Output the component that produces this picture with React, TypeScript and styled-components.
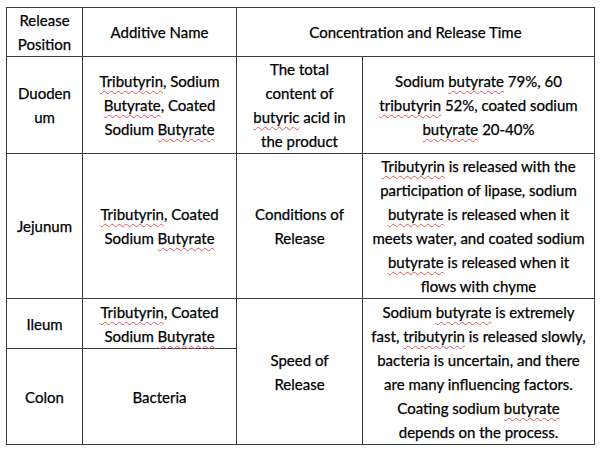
import styled, { createGlobalStyle } from "styled-components";

const GlobalStyle = createGlobalStyle`
  html, body {
    margin: 0;
    padding: 0;
    background: #ffffff;
  }
  body {
    font-family: Lato, "Liberation Sans", sans-serif;
    color: #000;
  }
`;

const Page = styled.div`
  width: 600px;
  height: 453px;
  padding: 7px 0 0 6px;
  box-sizing: border-box;
`;

const Table = styled.table`
  border-collapse: collapse;
  table-layout: fixed;
  width: 588px;
  border: 1.5px solid #666;
`;

const Cell = styled.td<{ $h?: number }>`
  border: 1px solid #3a3a3a;
  height: ${(p) => (p.$h ? `${p.$h}px` : "auto")};
  padding: 0;
  text-align: center;
  vertical-align: middle;
  font-size: 15px;
  line-height: 24px;
  white-space: nowrap;
  -webkit-text-stroke: 0.25px #000;
`;

const Typo = styled.span`
  text-decoration: underline wavy #e05858;
  text-decoration-thickness: 1px;
  text-underline-offset: 3px;
  text-decoration-skip-ink: none;
`;

export default function App() {
  return (
    <>
      <GlobalStyle />
      <Page>
        <Table>
          <colgroup>
            <col style={{ width: 76 }} />
            <col style={{ width: 154 }} />
            <col style={{ width: 126 }} />
            <col style={{ width: 232 }} />
          </colgroup>
          <tbody>
            <tr>
              <Cell $h={48}>
                Release
                <br />
                Position
              </Cell>
              <Cell>Additive Name</Cell>
              <Cell colSpan={2}>Concentration and Release Time</Cell>
            </tr>
            <tr>
              <Cell $h={96}>
                Duoden
                <br />
                um
              </Cell>
              <Cell>
                <Typo>Tributyrin</Typo>, Sodium
                <br />
                <Typo>Butyrate</Typo>, Coated
                <br />
                Sodium <Typo>Butyrate</Typo>
              </Cell>
              <Cell>
                The total
                <br />
                content of
                <br />
                <Typo>butyric</Typo> acid in
                <br />
                the product
              </Cell>
              <Cell>
                Sodium <Typo>butyrate</Typo> 79%, 60
                <br />
                <Typo>tributyrin</Typo> 52%, coated sodium
                <br />
                <Typo>butyrate</Typo> 20-40%
              </Cell>
            </tr>
            <tr>
              <Cell $h={144}>Jejunum</Cell>
              <Cell>
                <Typo>Tributyrin</Typo>, Coated
                <br />
                Sodium <Typo>Butyrate</Typo>
              </Cell>
              <Cell>
                Conditions of
                <br />
                Release
              </Cell>
              <Cell>
                <Typo>Tributyrin</Typo> is released with the
                <br />
                participation of lipase, sodium
                <br />
                <Typo>butyrate</Typo> is released when it
                <br />
                meets water, and coated sodium
                <br />
                <Typo>butyrate</Typo> is released when it
                <br />
                flows with chyme
              </Cell>
            </tr>
            <tr>
              <Cell $h={49}>Ileum</Cell>
              <Cell>
                <Typo>Tributyrin</Typo>, Coated
                <br />
                Sodium <Typo>Butyrate</Typo>
              </Cell>
              <Cell rowSpan={2}>
                Speed of
                <br />
                Release
              </Cell>
              <Cell rowSpan={2}>
                Sodium <Typo>butyrate</Typo> is extremely
                <br />
                fast, <Typo>tributyrin</Typo> is released slowly,
                <br />
                bacteria is uncertain, and there
                <br />
                are many influencing factors.
                <br />
                Coating sodium <Typo>butyrate</Typo>
                <br />
                depends on the process.
              </Cell>
            </tr>
            <tr>
              <Cell $h={95}>Colon</Cell>
              <Cell>Bacteria</Cell>
            </tr>
          </tbody>
        </Table>
      </Page>
    </>
  );
}
